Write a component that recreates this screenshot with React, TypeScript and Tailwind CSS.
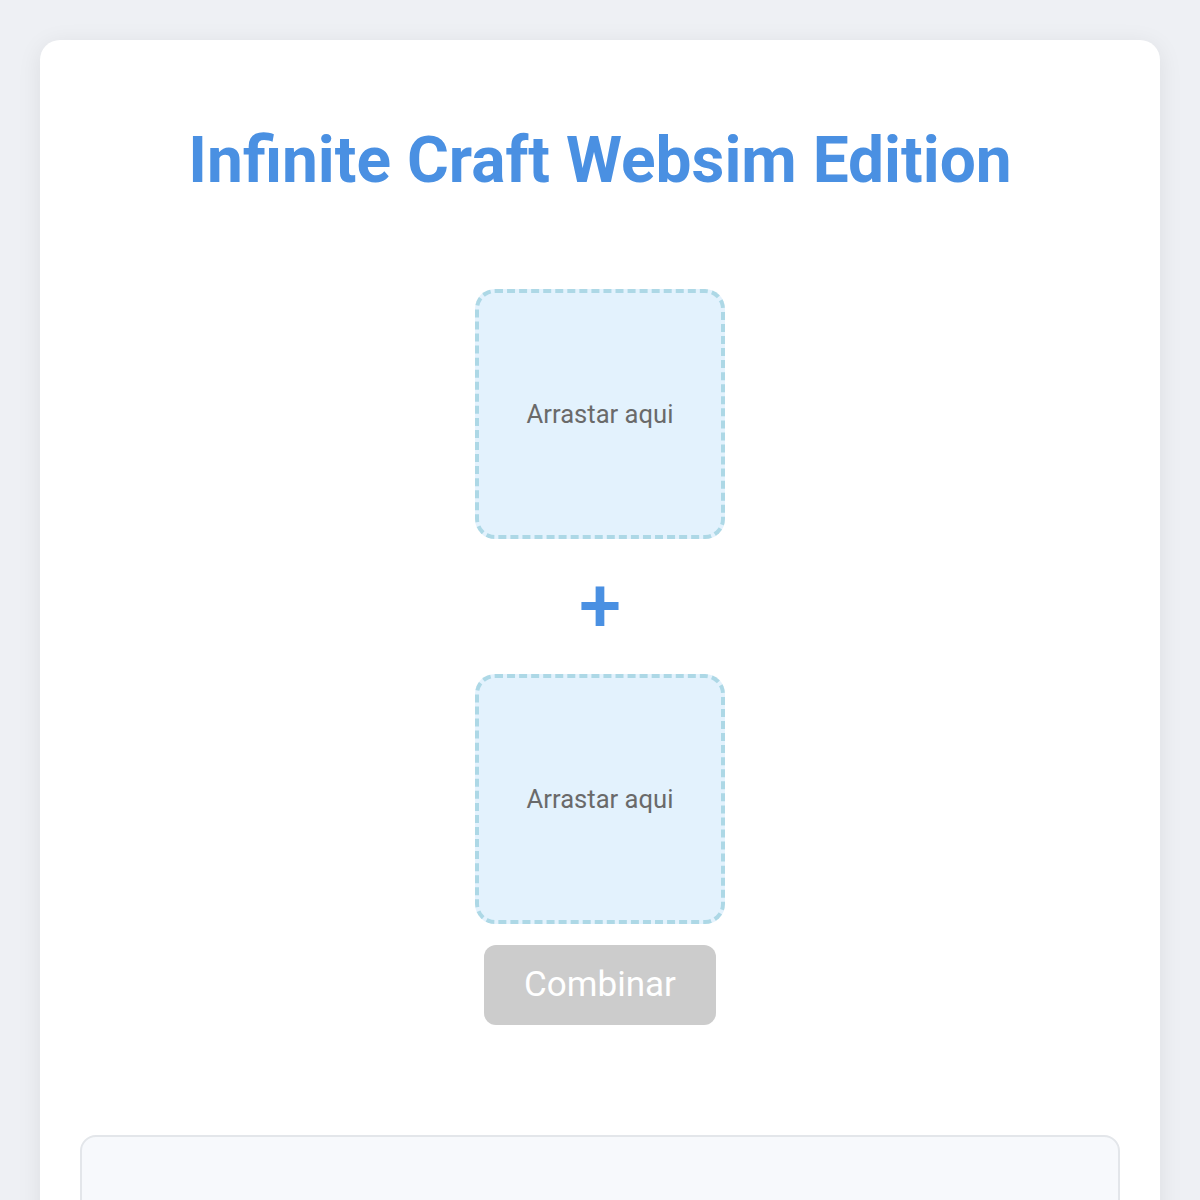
import React from "react";

function DropZone() {
  return (
    <div className="w-[250px] h-[250px] rounded-[20px] border-4 border-dashed border-[#add8e6] bg-[#e3f2fd] flex items-center justify-center">
      <span className="text-[25.6px] text-[#6a6a6a]">Arrastar aqui</span>
    </div>
  );
}

export default function App() {
  return (
    <div
      className="min-h-[1200px] bg-[#eef0f4] pt-10 px-10"
      style={{ fontFamily: "Roboto, 'Noto Sans', sans-serif" }}
    >
      <div className="bg-white rounded-[20px] shadow-[0_4px_24px_rgba(0,0,0,0.08)] px-10 pt-10 pb-10 min-h-[1200px]">
        <h1 className="text-center text-[64px] font-bold text-[#4a90e2] mt-[43px] leading-[1.2]">
          Infinite Craft Websim Edition
        </h1>
        <div className="flex flex-col items-center mt-[89px]">
          <DropZone />
          <div className="h-[135px] flex items-center justify-center">
            <span className="text-[76px] font-medium text-[#4a90e2] leading-none">+</span>
          </div>
          <DropZone />
          <button className="mt-[21px] w-[232px] h-[80px] rounded-[12px] bg-[#ccc] text-white text-[35px]">
            Combinar
          </button>
        </div>
        <div className="mt-[110px] h-[300px] rounded-[16px] border-2 border-[#e3e6ea] bg-[#f7f9fc]" />
      </div>
    </div>
  );
}
